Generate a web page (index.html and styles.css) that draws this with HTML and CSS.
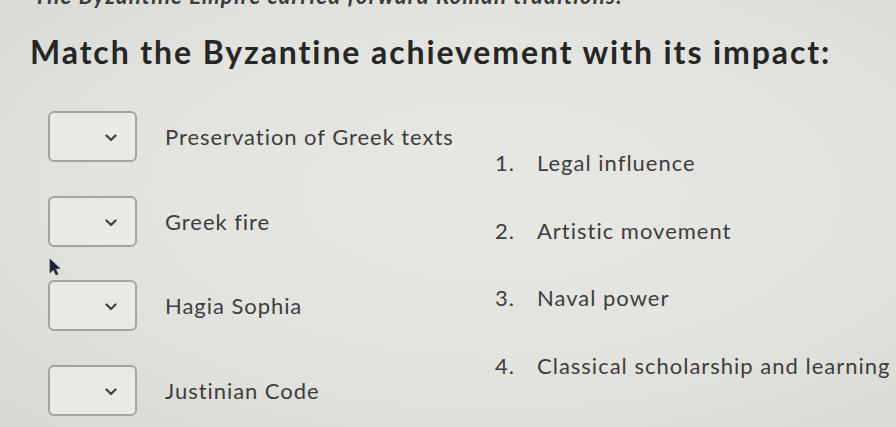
FILE: index.html
```html
<!DOCTYPE html>
<html lang="en">
<head>
<meta charset="utf-8">
<title>Byzantine achievements</title>
<link rel="stylesheet" href="styles.css">
</head>
<body>
<div class="question">
    <p class="prompt">The Byzantine Empire carried forward Roman traditions.</p>
    <h1>Match the Byzantine achievement with its impact:</h1>

    <div class="match">
        <div class="choices">
            <div class="choice">
                <div class="select"><svg class="chevron" viewBox="0 0 12 8"><polyline points="1.5,1.5 6,6 10.5,1.5"/></svg></div>
                <span class="label">Preservation of Greek texts</span>
            </div>
            <div class="choice">
                <div class="select"><svg class="chevron" viewBox="0 0 12 8"><polyline points="1.5,1.5 6,6 10.5,1.5"/></svg></div>
                <span class="label">Greek fire</span>
            </div>
            <div class="choice">
                <div class="select"><svg class="chevron" viewBox="0 0 12 8"><polyline points="1.5,1.5 6,6 10.5,1.5"/></svg></div>
                <span class="label">Hagia Sophia</span>
            </div>
            <div class="choice">
                <div class="select"><svg class="chevron" viewBox="0 0 12 8"><polyline points="1.5,1.5 6,6 10.5,1.5"/></svg></div>
                <span class="label">Justinian Code</span>
            </div>
        </div>

        <ol class="answers">
            <li><span class="num">1.</span>Legal influence</li>
            <li><span class="num">2.</span>Artistic movement</li>
            <li><span class="num">3.</span>Naval power</li>
            <li><span class="num">4.</span>Classical scholarship and learning</li>
        </ol>
    </div>

    <!-- mouse pointer -->
    <svg class="pointer" viewBox="0 0 12 18" width="12" height="18">
        <path d="M1 1 L1 15 L4.5 11.5 L7 17 L9 16 L6.5 10.5 L11 10.5 Z" fill="#1d1f2e" stroke="#3a3d55" stroke-width="0.8"/>
    </svg>
</div>
</body>
</html>
```

FILE: styles.css
```css
html, body {
    margin: 0;
    height: 100%;
}

body {
    font-family: Lato, "Open Sans", sans-serif;
    font-variant-ligatures: none;
    background: radial-gradient(ellipse at 55% 45%, #e7e7e3 0%, #e2e2de 55%, #d8d8d3 100%);
    color: #3e3e3e;
    overflow: hidden;
}

.question {
    display: flow-root;
    position: relative;
    padding-left: 30px;
}

.prompt {
    margin: -17px 0 0 4px;
    font-size: 22px;
    line-height: 26px;
    font-style: italic;
    font-weight: bold;
    letter-spacing: 1.3px;
    color: #3a3a3a;
}

h1 {
    margin: 25px 0 0;
    font-size: 32px;
    line-height: 36px;
    font-weight: bold;
    letter-spacing: 1.9px;
    color: #262626;
}

.match {
    display: flex;
    margin-top: 41px;
}

.choices {
    display: flex;
    flex-direction: column;
    gap: 33.5px;
    width: 447px;
    padding-left: 18px;
}

.choice {
    display: flex;
    align-items: center;
}

.select {
    box-sizing: border-box;
    position: relative;
    width: 89px;
    height: 51px;
    border: 2px solid #a3a3a1;
    border-radius: 6px;
    background: #e9e9e6;
}

.chevron {
    position: absolute;
    right: 18px;
    top: 21px;
    width: 12px;
    height: 8px;
    fill: none;
    stroke: #474747;
    stroke-width: 2.4;
    stroke-linecap: round;
    stroke-linejoin: round;
}

.label {
    margin-left: 28px;
    font-size: 22px;
    letter-spacing: 0.95px;
    color: #3d3d3d;
}

.answers {
    list-style: none;
    margin: 37px 0 0;
    padding: 0;
    display: flex;
    flex-direction: column;
    gap: 37.7px;
}

.answers li {
    font-size: 22px;
    line-height: 30px;
    letter-spacing: 1px;
    color: #3d3d3d;
    white-space: nowrap;
}

.num {
    display: inline-block;
    width: 42px;
}

.pointer {
    position: absolute;
    left: 49px;
    top: 258px;
}
```
